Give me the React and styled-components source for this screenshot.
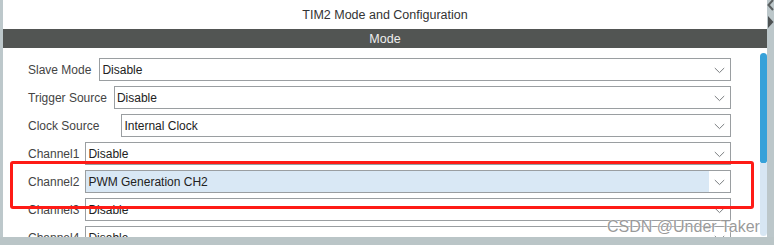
import React from "react";
import styled, { createGlobalStyle } from "styled-components";

const Global = createGlobalStyle`
  html, body { margin: 0; padding: 0; background: #bcc7ca; }
  body { width: 774px; height: 245px; overflow: hidden; font-family: "Liberation Sans", Arial, sans-serif; }
`;

const Page = styled.div`
  position: relative;
  width: 774px;
  height: 245px;
  display: flex;
  flex-direction: column;
  background: #bcc7ca;
`;

const Top = styled.div`
  display: flex;
  height: 237px;
`;

const LeftEdge = styled.div`
  width: 3px;
  background: #bdc8cb;
`;

const Panel = styled.div`
  width: 764px;
  display: flex;
  flex-direction: column;
  background: #ffffff;
  overflow: hidden;
`;

const RightStrip = styled.div`
  width: 7px;
  background: #bcc7ca;
  display: flex;
  flex-direction: column;
  align-items: flex-start;
`;

const Title = styled.div`
  height: 29px;
  display: flex;
  align-items: center;
  justify-content: center;
  font-size: 12.5px;
  color: #333333;
  padding-top: 1px;
  box-sizing: border-box;
`;

const Band = styled.div`
  height: 19px;
  background: #525553;
  color: #eeeeee;
  font-size: 12.5px;
  display: flex;
  align-items: center;
  justify-content: center;
`;

const Content = styled.div`
  flex: 1;
  display: flex;
  min-height: 0;
`;

const Rows = styled.div`
  flex: 1;
  display: flex;
  flex-direction: column;
  gap: 5px;
  padding: 10px 29px 0 25px;
`;

const Row = styled.div`
  display: flex;
  align-items: center;
  height: 23px;
  flex-shrink: 0;
`;

const Label = styled.span`
  font-size: 12px;
  color: #444444;
  margin-right: ${(p) => p.$gap}px;
  white-space: nowrap;
`;

const Select = styled.div`
  flex: 1;
  height: 23px;
  box-sizing: border-box;
  border: 1px solid #9a9ea1;
  display: flex;
  background: #ffffff;
`;

const Value = styled.div`
  flex: 1;
  display: flex;
  align-items: center;
  padding-left: 2px;
  font-size: 12px;
  color: #222222;
  background: ${(p) => (p.$active ? "#d9e8f5" : "#ffffff")};
`;

const Arrow = styled.div`
  width: 21px;
  display: flex;
  align-items: center;
  justify-content: center;
  padding-top: 1px;
`;

const Scrollbar = styled.div`
  width: 7px;
  margin-top: 5px;
  margin-bottom: 1px;
  display: flex;
  flex-direction: column;
`;

const Thumb = styled.div`
  height: 110px;
  background: #36a1d9;
  border-radius: 4px 4px 3px 3px;
`;

const Track = styled.div`
  flex: 1;
  background: #d7e6f3;
  border-radius: 0 0 4px 4px;
`;

const Bottom = styled.div`
  height: 8px;
  background: #bac5c7;
`;

const Highlight = styled.div`
  position: absolute;
  left: 10px;
  top: 161px;
  width: 744px;
  height: 48px;
  box-sizing: border-box;
  border: 3px solid #fe1b16;
  border-radius: 3px;
  pointer-events: none;
`;

const Watermark = styled.div`
  position: absolute;
  left: 607px;
  top: 218px;
  font-size: 16px;
  color: rgba(120, 120, 120, 0.75);
  text-shadow: 0 0 1px #ffffff, 0 0 2px #ffffff;
  white-space: nowrap;
  pointer-events: none;
`;

const Chevron = () => (
  <svg width="11" height="7" viewBox="0 0 11 7">
    <path d="M0.8 1 L5.5 5.6 L10.2 1" fill="none" stroke="#7a7e80" strokeWidth="1" />
  </svg>
);

const StripArrows = () => (
  <svg width="7" height="30" viewBox="0 0 7 30">
    <path d="M6 0 L1.5 5 L6 10" fill="none" stroke="#5a5f60" strokeWidth="2" />
    <path d="M1 16 L6.5 22 L1 28 Z" fill="#4d5253" />
  </svg>
);

const rows = [
  { label: "Slave Mode", value: "Disable", gap: 8 },
  { label: "Trigger Source", value: "Disable", gap: 7 },
  { label: "Clock Source", value: "Internal Clock", gap: 22 },
  { label: "Channel1", value: "Disable", gap: 6 },
  { label: "Channel2", value: "PWM Generation CH2", gap: 6, active: true },
  { label: "Channel3", value: "Disable", gap: 6 },
  { label: "Channel4", value: "Disable", gap: 6 },
];

export default function App() {
  return (
    <>
      <Global />
      <Page>
        <Top>
          <LeftEdge />
          <Panel>
            <Title>TIM2 Mode and Configuration</Title>
            <Band>Mode</Band>
            <Content>
              <Rows>
                {rows.map((r) => (
                  <Row key={r.label}>
                    <Label $gap={r.gap}>{r.label}</Label>
                    <Select>
                      <Value $active={r.active}>{r.value}</Value>
                      <Arrow>
                        <Chevron />
                      </Arrow>
                    </Select>
                  </Row>
                ))}
              </Rows>
              <Scrollbar>
                <Thumb />
                <Track />
              </Scrollbar>
            </Content>
          </Panel>
          <RightStrip>
            <StripArrows />
          </RightStrip>
        </Top>
        <Bottom />
        <Highlight />
        <Watermark>CSDN @Under Taker</Watermark>
      </Page>
    </>
  );
}
